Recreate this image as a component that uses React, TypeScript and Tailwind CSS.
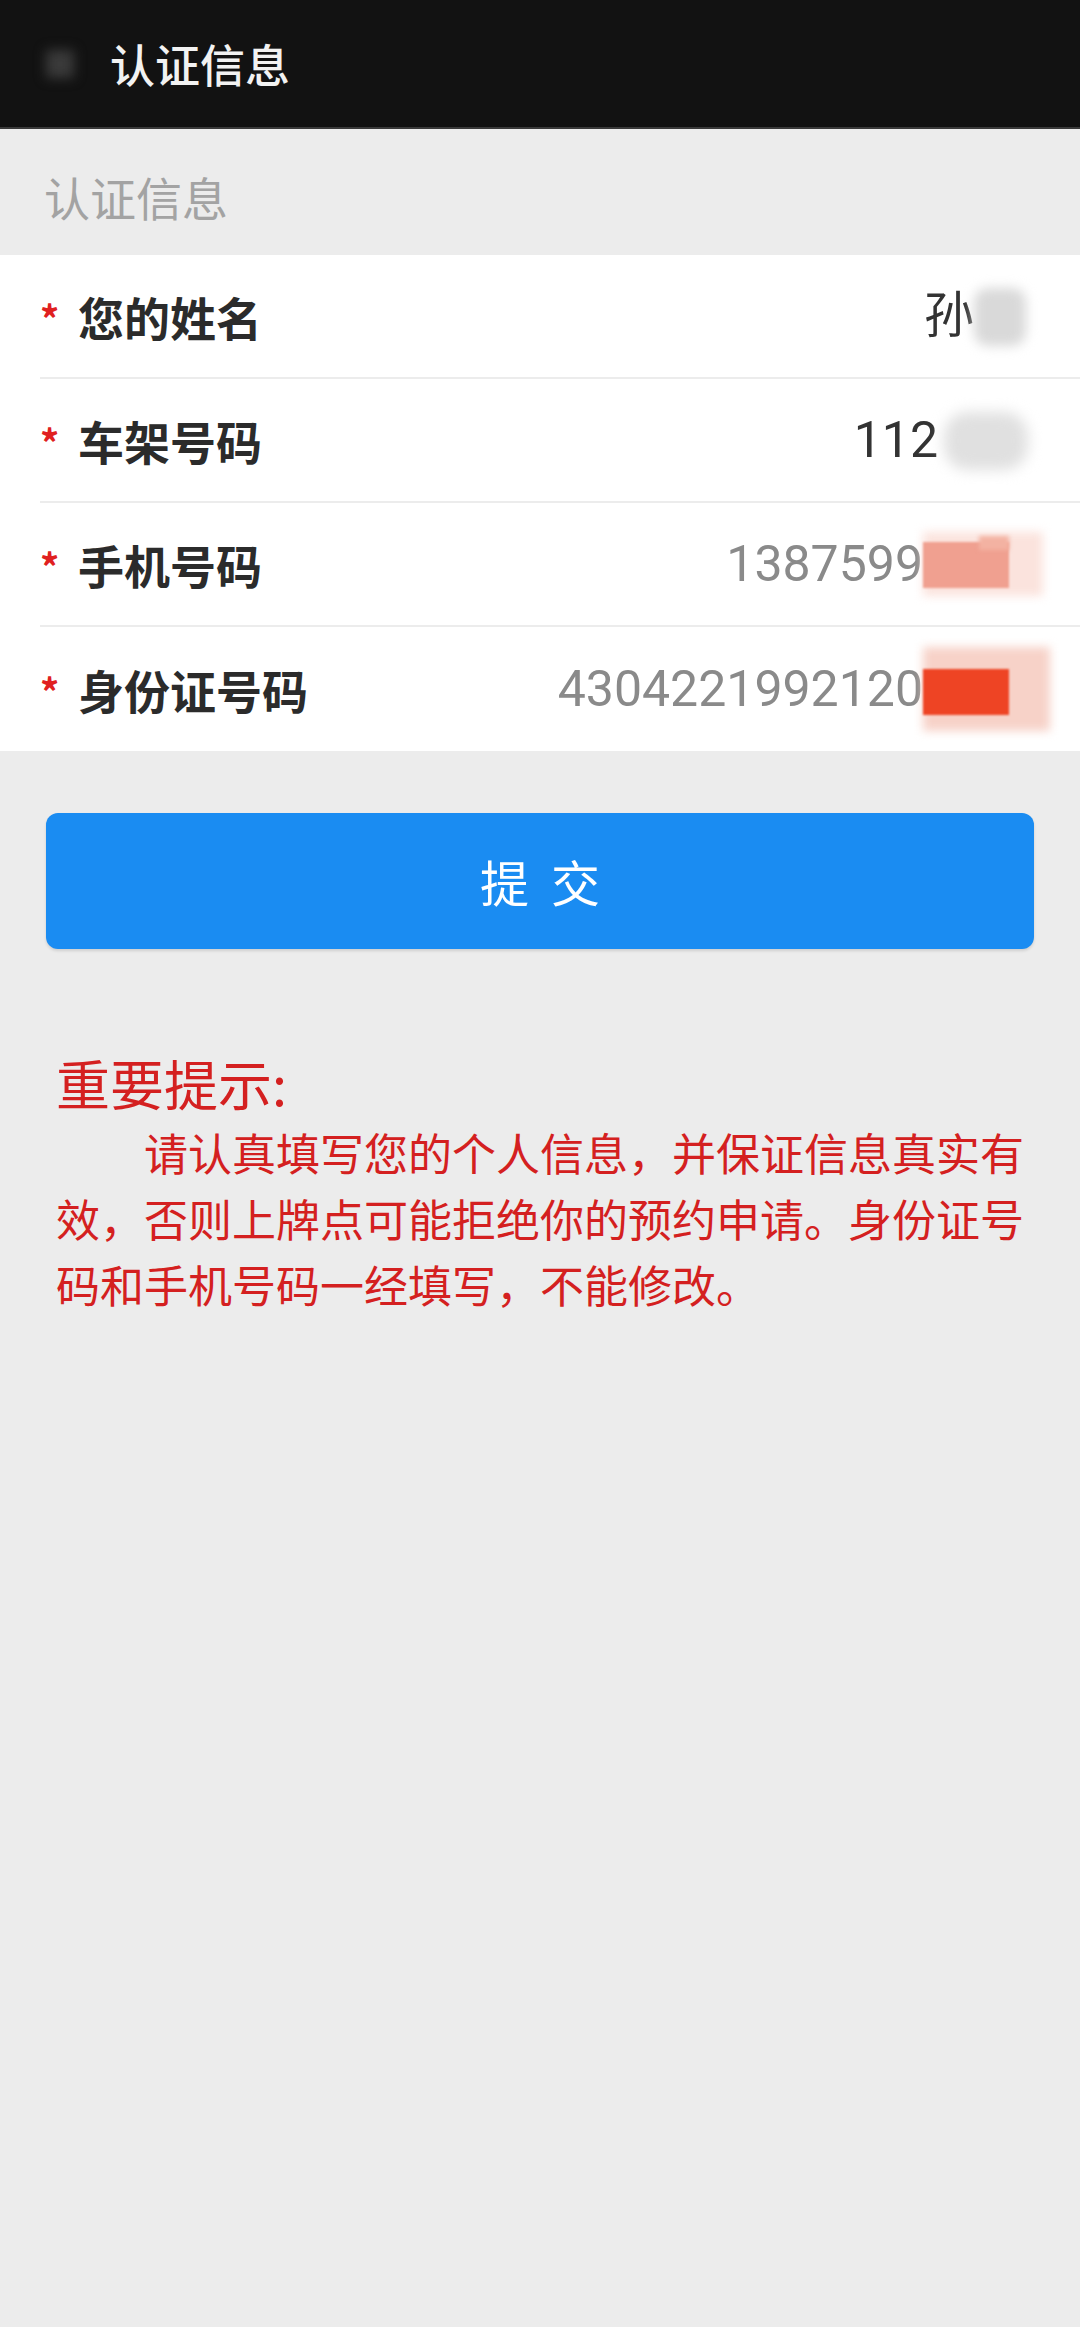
import React from "react";

const rows = [
  { label: "您的姓名", value: "孙", valueColor: "text-[#333333]", blur: "name" },
  { label: "车架号码", value: "112", valueColor: "text-[#333333]", blur: "vin" },
  { label: "手机号码", value: "1387599", valueColor: "text-[#8a8a8a]", blur: "phone" },
  { label: "身份证号码", value: "4304221992120", valueColor: "text-[#8a8a8a]", blur: "id" },
];

function Redaction({ kind }: { kind: string }) {
  if (kind === "name") {
    return (
      <span className="relative inline-block w-[76px] h-[64px]">
        <span className="absolute left-[0px] top-[4px] w-[52px] h-[58px] bg-[#d9d9d9] blur-[6px] rounded-[14px]" />
      </span>
    );
  }
  if (kind === "vin") {
    return (
      <span className="relative inline-block w-[112px] h-[64px]">
        <span className="absolute left-[6px] top-[4px] w-[84px] h-[58px] bg-[#e0e0e0] blur-[7px] rounded-[24px]" />
      </span>
    );
  }
  if (kind === "phone") {
    return (
      <span className="relative inline-block w-[127px] h-[64px]">
        <span className="absolute left-[0px] top-[0px] w-[120px] h-[64px] bg-[#fbe3dd] blur-[5px]" />
        <span className="absolute left-[0px] top-[10px] w-[86px] h-[46px] bg-[#f0a090] blur-[1px]" />
        <span className="absolute left-[56px] top-[4px] w-[30px] h-[14px] bg-[#f3b2a2] blur-[2px]" />
      </span>
    );
  }
  return (
    <span className="relative inline-block w-[127px] h-[84px]">
      <span className="absolute left-[0px] top-[0px] w-[127px] h-[84px] bg-[#f7d2c8] blur-[5px]" />
      <span className="absolute left-[0px] top-[22px] w-[86px] h-[46px] bg-[#ee4424] blur-[1px]" />
    </span>
  );
}

export default function App() {
  return (
    <div
      className="min-h-[2327px] w-full bg-[#ececec]"
      style={{ fontFamily: "'Noto Sans CJK SC', 'Noto Sans', sans-serif" }}
    >
      {/* Top bar */}
      <div className="h-[129px] bg-[#121212] flex items-center border-b-2 border-[#3a3a3a]">
        <div className="ml-[38px] w-[44px] h-[44px] relative">
          <span className="absolute inset-[8px] bg-[#3a3a3a] blur-[6px]" />
        </div>
        <span className="ml-[28px] text-[45px] font-medium text-[#f2f2f2] leading-none">认证信息</span>
      </div>

      {/* Section label */}
      <div className="h-[126px] flex items-center pl-[44px] pt-[8px]">
        <span className="text-[46px] text-[#a3a3a3] leading-none">认证信息</span>
      </div>

      {/* List */}
      <div className="bg-white">
        {rows.map((r, i) => (
          <div key={r.label} className="pl-[40px]">
            <div
              className={`h-[124px] flex items-center justify-between pr-[30px] ${
                i < rows.length - 1 ? "border-b-2 border-[#ececec]" : ""
              }`}
            >
              <div className="flex items-center">
                <span className="text-[#e02020] text-[38px] font-bold leading-none mt-[4px] w-[38px]">*</span>
                <span className="text-[46px] font-bold text-[#2b2b2b] leading-none">{r.label}</span>
              </div>
              <div className="flex items-center">
                <span
                  className={`text-[50px] leading-none ${r.valueColor}`}
                  style={{ fontFamily: "Roboto, 'Noto Sans CJK SC', sans-serif" }}
                >
                  {r.value}
                </span>
                <Redaction kind={r.blur} />
              </div>
            </div>
          </div>
        ))}
      </div>

      {/* Submit button */}
      <div className="px-[46px] pt-[62px]">
        <button className="w-full h-[136px] rounded-[12px] bg-[#1a8cf2] text-white text-[49px] tracking-[0.45em] flex items-center justify-center shadow-[0_2px_3px_rgba(0,0,0,0.12)]">
          <span className="pl-[0.45em]">提交</span>
        </button>
      </div>

      {/* Notice */}
      <div className="px-[56px] pt-[98px] text-[#d42020]">
        <div className="text-[54px] leading-[72px]">重要提示:</div>
        <p className="text-[44px] leading-[66px] indent-[2em]">
          请认真填写您的个人信息，并保证信息真实有效，否则上牌点可能拒绝你的预约申请。身份证号码和手机号码一经填写，不能修改。
        </p>
      </div>
    </div>
  );
}
